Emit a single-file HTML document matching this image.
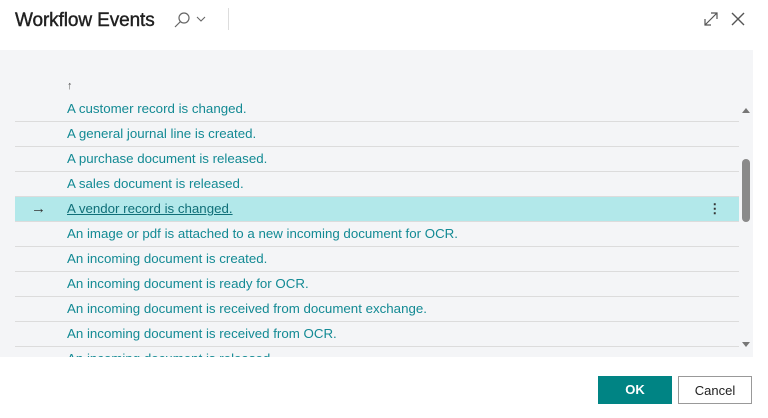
<!DOCTYPE html>
<html><head><style>
body{margin:0;width:768px;height:418px;background:#fff;font-family:"Liberation Sans",sans-serif;position:relative;overflow:hidden}
.t{position:absolute;left:15px;top:10px;font-size:19px;color:#212121;font-weight:normal;letter-spacing:-0.1px;-webkit-text-stroke:0.4px #212121}
.grey{position:absolute;left:0;top:50px;width:753px;height:307px;background:#f4f5f7;overflow:hidden}
.row{position:absolute;left:15px;width:724px;height:24px;border-bottom:1px solid #dcdcdc;font-size:13.3px;color:#138a94;line-height:24px}
.row span{position:absolute;left:52px}
.sel{background:#b2e8ea}
.btn{position:absolute;top:376px;height:28px;width:74px;font-size:13px;text-align:center;line-height:28px;box-sizing:border-box}
</style></head><body>
<div class="t">Workflow Events</div>
<svg style="position:absolute;left:172px;top:10px" width="40" height="20"><circle cx="12" cy="8" r="5" fill="none" stroke="#666" stroke-width="1.2"/><line x1="8.5" y1="11.5" x2="3" y2="17" stroke="#666" stroke-width="1.2"/><polyline points="25,7 29,11 33,7" fill="none" stroke="#666" stroke-width="1.1"/></svg>
<div style="position:absolute;left:228px;top:8px;width:1px;height:22px;background:#ddd"></div>
<svg style="position:absolute;left:700px;top:8px" width="50" height="22"><path d="M5 17 L17 5 M11 5 H17 V11 M5 11 V17 H11" fill="none" stroke="#555" stroke-width="1.2"/><path d="M32 5 L44 17 M44 5 L32 17" stroke="#555" stroke-width="1.4"/></svg>
<div class="grey">
<div style="position:absolute;left:67px;top:30px;font-size:11px;color:#555">&#8593;</div>
<div class="row" style="top:47px"><span>A customer record is changed.</span></div>
<div class="row" style="top:72px"><span>A general journal line is created.</span></div>
<div class="row" style="top:97px"><span>A purchase document is released.</span></div>
<div class="row" style="top:122px"><span>A sales document is released.</span></div>
<div class="row sel" style="top:147px"><b style="position:absolute;left:16px;font-weight:normal;color:#333;font-size:15px">&#8594;</b><span style="text-decoration:underline;color:#0f6f78">A vendor record is changed.</span><b style="position:absolute;left:693px;color:#333;font-weight:bold">&#8942;</b></div>
<div class="row" style="top:172px"><span>An image or pdf is attached to a new incoming document for OCR.</span></div>
<div class="row" style="top:197px"><span>An incoming document is created.</span></div>
<div class="row" style="top:222px"><span>An incoming document is ready for OCR.</span></div>
<div class="row" style="top:247px"><span>An incoming document is received from document exchange.</span></div>
<div class="row" style="top:272px"><span>An incoming document is received from OCR.</span></div>
<div class="row" style="top:297px"><span>An incoming document is released.</span></div>
<svg style="position:absolute;left:740px;top:55px" width="12" height="250"><polygon points="2,8 10,8 6,3" fill="#777"/><rect x="2" y="54" width="8" height="63" rx="4" fill="#8a8a8a"/><polygon points="2,237 10,237 6,242" fill="#777"/></svg>
</div>
<div class="btn" style="left:598px;background:#008484;color:#fff;font-weight:bold">OK</div>
<div class="btn" style="left:678px;border:1px solid #999;color:#222">Cancel</div>
</body></html>
